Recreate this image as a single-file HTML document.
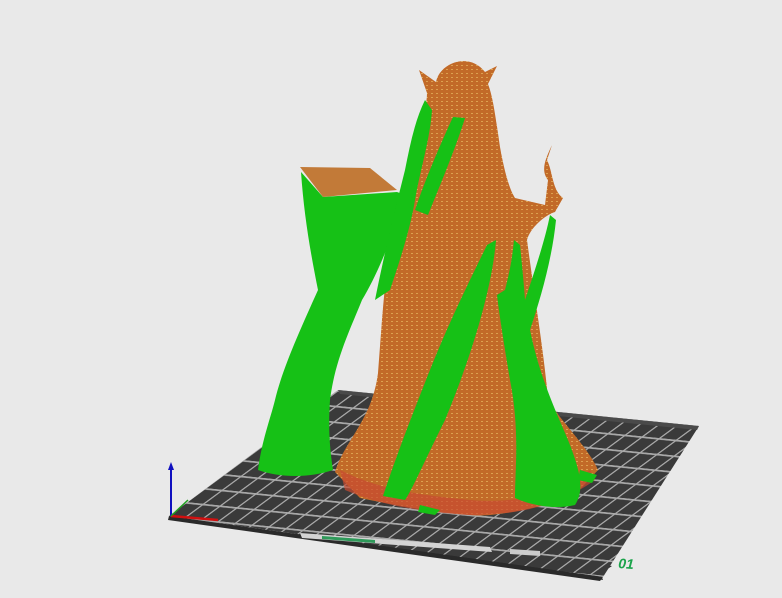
<!DOCTYPE html>
<html><head><style>
html,body{margin:0;padding:0;background:#e9e9e9;width:782px;height:598px;overflow:hidden}
svg{display:block}
</style></head><body>
<svg width="782" height="598" viewBox="0 0 782 598" xmlns="http://www.w3.org/2000/svg">
<defs>
<pattern id="grid" width="20" height="20" patternUnits="userSpaceOnUse" patternTransform="matrix(0.85,0.085,-0.95,0.7,338,390)">
<rect width="20" height="20" fill="#3a3a3a"/>
<path d="M0 1H20M1 0V20" stroke="#a8a8a8" stroke-width="2.4"/>
</pattern>
<pattern id="wood" width="5" height="4" patternUnits="userSpaceOnUse">
<rect width="5" height="4" fill="#c26a28"/>
<rect x="1" y="1" width="2" height="1" fill="#dca050"/>
</pattern>
</defs>
<!-- bed -->
<polygon points="290,528 600,574 612,566 300,522" fill="#2e2e2e"/>
<polygon points="292,526 600,572 603,580 296,535" fill="#2c2c2c"/>
<polygon points="338,390 699,426 603,577 169,516" fill="url(#grid)"/>
<polygon points="338,390 699,426 697,430 340,394" fill="#4a4a4a"/>
<polygon points="169,516 603,577 600,581 168,520" fill="#2a2a2a"/>
<polygon points="300,533 490,547 492,552 302,538" fill="#d4d4d4"/>
<polygon points="322,536 375,540 375,543 322,539" fill="#2f9a5a"/>
<polygon points="510,549 540,551 540,556 510,554" fill="#cccccc"/>
<text x="618" y="568" font-family="Liberation Sans, sans-serif" font-weight="bold" font-style="italic" font-size="14" fill="#1aa34a" transform="rotate(4 618 568)">01</text>
<!-- axes -->
<line x1="171" y1="516" x2="171" y2="466" stroke="#1010c0" stroke-width="2"/>
<polygon points="168,470 174,470 171,462" fill="#1010c0"/>
<line x1="171" y1="516" x2="218" y2="520" stroke="#d01010" stroke-width="2.5"/>
<line x1="171" y1="516" x2="188" y2="500" stroke="#20a020" stroke-width="1.5"/>
<!-- robe -->
<path d="M419,70 L436,82 C440,62 470,52 485,72 L497,66 L488,84 C492,95 494,105 500,147 C505,175 510,190 515,198 L545,205 L548,180 C540,170 546,158 552,145 L547,160 C553,172 552,190 563,198 L555,212 C545,215 530,228 527,240 C535,300 545,360 548,400 C560,420 590,450 598,470 L570,500 C540,505 500,518 470,515 C430,512 395,505 360,498 L335,472 C345,440 372,420 378,373 C382,320 384,290 387,273 C395,220 405,180 413,150 C418,130 427,110 427,93 Z" fill="url(#wood)"/>
<path d="M340,470 C380,490 420,495 470,500 C520,505 560,490 590,470 L595,480 C560,505 520,515 470,515 C420,512 380,505 345,490 Z" fill="#c84a30" opacity="0.7"/>
<!-- book -->
<polygon points="300,167 370,168 397,190 323,197" fill="#c27a38"/>
<!-- green supports -->
<g fill="#16c116">
<path d="M301,172 L323,197 L397,192 L405,195 C395,230 380,270 362,300 C350,330 335,360 330,400 C328,430 330,450 333,470 C310,478 280,478 258,470 C262,440 270,420 275,400 C282,370 300,330 318,290 C310,250 304,215 301,172 Z"/>
<path d="M425,100 L432,110 C430,140 420,170 415,200 C410,230 400,260 390,290 L375,300 C385,250 395,210 405,170 C410,145 415,120 425,100 Z"/>
<path d="M453,117 L465,118 C455,150 440,185 428,215 L415,210 C425,180 440,145 453,117 Z"/>
<path d="M487,245 L496,240 C492,290 470,360 445,420 C425,460 412,490 405,500 L383,496 C395,460 410,420 430,370 C450,320 470,280 487,245 Z"/>
<path d="M550,215 L556,220 C552,260 540,300 530,330 C540,380 560,420 568,440 C580,470 585,490 575,505 C555,510 530,505 515,498 C515,470 520,430 510,380 C505,350 500,320 497,295 L505,290 C510,270 512,260 514,240 L520,245 C522,265 524,285 525,300 C535,270 545,240 550,215 Z"/>
<path d="M580,470 L597,475 L592,483 L578,480 Z"/>
<path d="M420,505 L440,510 L435,515 L418,512 Z"/>
</g>
</svg>
</body></html>
